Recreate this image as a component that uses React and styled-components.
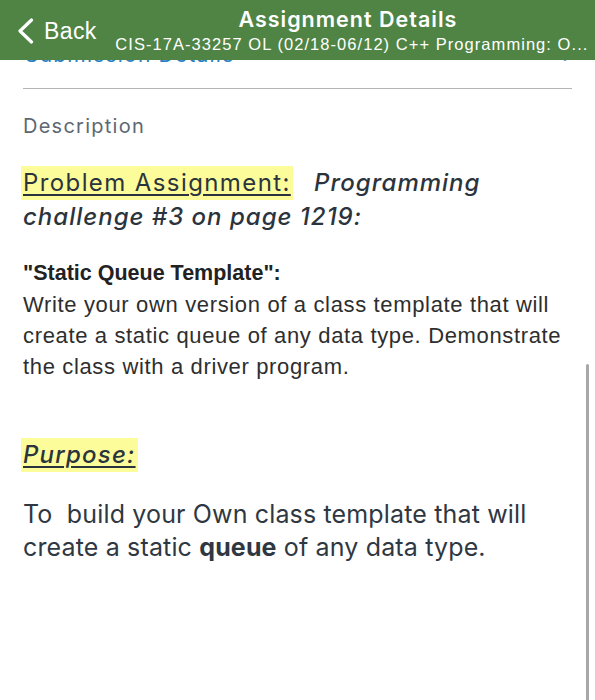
import React from "react";
import styled, { createGlobalStyle } from "styled-components";

const GlobalStyle = createGlobalStyle`
  html, body {
    margin: 0;
    padding: 0;
    background: #ffffff;
  }
  body {
    font-family: "Inter", "Liberation Sans", sans-serif;
  }
`;

const Screen = styled.div`
  position: relative;
  width: 595px;
  height: 700px;
  overflow: hidden;
  background: #ffffff;
`;

const Header = styled.header`
  position: absolute;
  top: 0;
  left: 0;
  right: 0;
  height: 60px;
  background: #4f8444;
  color: #ffffff;
  display: flex;
  align-items: center;
  z-index: 2;
`;

const BackButton = styled.div`
  display: flex;
  align-items: center;
  gap: 9px;
  padding-left: 17px;
  margin-top: 2px;
  font-family: "Liberation Sans", sans-serif;
  font-size: 23px;
  letter-spacing: 0.4px;
  flex-shrink: 0;
`;

const TitleBlock = styled.div`
  flex: 1;
  display: flex;
  flex-direction: column;
  align-items: center;
  padding-left: 12px;
  min-width: 0;
`;

const Title = styled.div`
  font-family: "Inter", sans-serif;
  font-weight: 600;
  font-size: 21.5px;
  letter-spacing: 1px;
  line-height: 26px;
  margin-top: 1px;
  margin-left: -8px;
`;

const Subtitle = styled.div`
  font-family: "Liberation Sans", sans-serif;
  font-size: 16.5px;
  letter-spacing: 1.05px;
  line-height: 22px;
  white-space: nowrap;
  margin-top: 1px;
`;

const Content = styled.main`
  padding: 0 23px;
`;

const HiddenRow = styled.div`
  height: 88px;
  border-bottom: 1.5px solid #b4b4b4;
  overflow: hidden;
  display: flex;
  justify-content: space-between;
  color: #2a7fc4;
`;

const HiddenRowText = styled.div`
  margin-top: 43px;
  font-size: 21px;
  letter-spacing: 1.2px;
  line-height: 24px;
  padding-left: 2px;
`;

const Section = styled.section`
  padding-top: 24px;
`;

const Label = styled.div`
  font-size: 20px;
  letter-spacing: 1.25px;
  color: #5d6772;
  line-height: 26px;
`;

const Lead = styled.p`
  margin: 27px 0 0 0;
  font-size: 24px;
  letter-spacing: 1.4px;
  line-height: 34px;
  color: #2b343d;
`;

const Mark = styled.span`
  background: #fdfc9a;
  text-decoration: underline;
  text-underline-offset: 3px;
  text-decoration-thickness: 1.5px;
  padding: 2px 2px 3px 2px;
  margin-left: -2px;
  font-style: ${(p) => (p.italic ? "italic" : "normal")};
  font-weight: ${(p) => (p.italic ? 500 : 400)};
`;

const Emph = styled.em`
  font-weight: 500;
  letter-spacing: 1px;
  margin-left: 5px;
`;

const Body = styled.div`
  margin-top: 24px;
  font-family: "Liberation Sans", sans-serif;
  font-size: 22px;
  letter-spacing: 0.65px;
  line-height: 31px;
  color: #2e2e2e;
`;

const BodyTitle = styled.div`
  font-weight: 700;
  font-size: 21.5px;
  letter-spacing: 0;
  color: #222;
`;

const Purpose = styled.p`
  margin: 56px 0 0 0;
  font-size: 24px;
  letter-spacing: 1.2px;
  line-height: 34px;
  color: #2b343d;
`;

const Closing = styled.p`
  margin: 26px 0 0 0;
  font-size: 25px;
  letter-spacing: 0.15px;
  line-height: 33px;
  color: #2f3842;
`;

const ScrollBar = styled.div`
  position: absolute;
  right: 6px;
  top: 364px;
  width: 3px;
  height: 340px;
  border-radius: 2px;
  background: #a8a8a8;
`;

const Chevron = () => (
  <svg width="18" height="26" viewBox="0 0 18 26" fill="none">
    <path
      d="M14.5 2 L3 13 L14.5 24"
      stroke="#ffffff"
      strokeWidth="3.2"
      strokeLinecap="round"
      strokeLinejoin="round"
    />
  </svg>
);

export default function App() {
  return (
    <Screen>
      <GlobalStyle />
      <Header>
        <BackButton>
          <Chevron />
          Back
        </BackButton>
        <TitleBlock>
          <Title>Assignment Details</Title>
          <Subtitle>CIS-17A-33257 OL (02/18-06/12) C++ Programming: O...</Subtitle>
        </TitleBlock>
      </Header>
      <Content>
        <HiddenRow>
          <HiddenRowText>Submission Details</HiddenRowText>
          <HiddenRowText>›</HiddenRowText>
        </HiddenRow>
        <Section>
          <Label>Description</Label>
          <Lead>
            <Mark>Problem Assignment:</Mark>&nbsp;&nbsp;
            <Emph>Programming challenge #3 on page 1219:</Emph>
          </Lead>
          <Body>
            <BodyTitle>"Static Queue Template":</BodyTitle>
            Write your own version of a class template that will create a
            static queue of any data type. Demonstrate the class with a driver
            program.
          </Body>
          <Purpose>
            <Mark italic>Purpose:</Mark>
          </Purpose>
          <Closing>
            To&nbsp; build your Own class template that will create a static{" "}
            <b>queue</b> of any data type.
          </Closing>
        </Section>
      </Content>
      <ScrollBar />
    </Screen>
  );
}
